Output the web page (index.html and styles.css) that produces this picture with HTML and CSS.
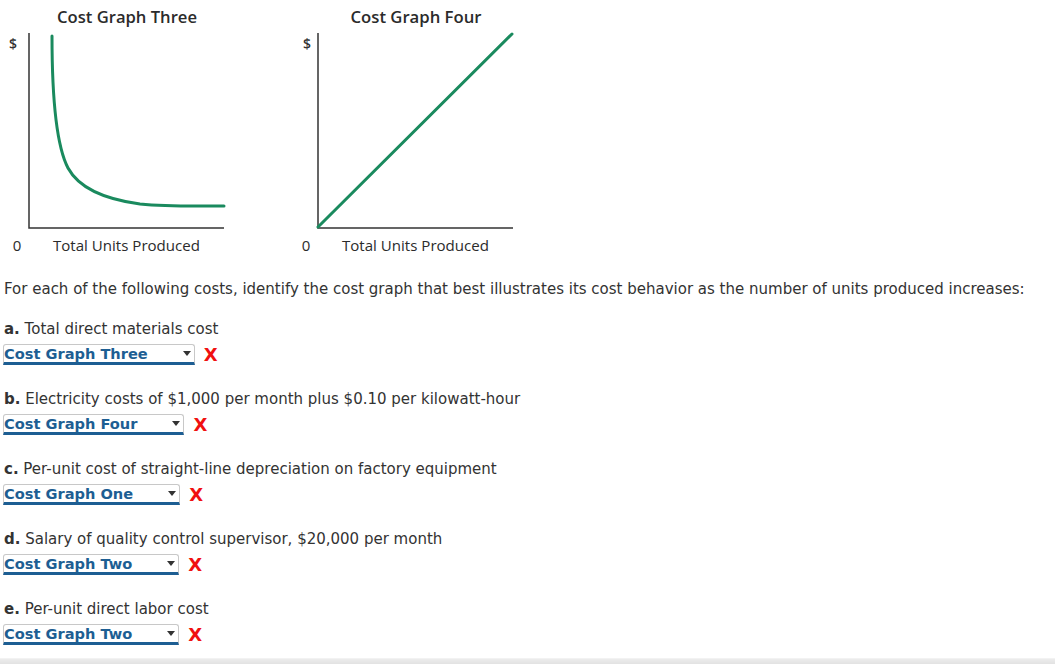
FILE: index.html
```html
<!DOCTYPE html>
<html>
<head>
<meta charset="utf-8">
<title>Cost Graphs</title>
<link rel="stylesheet" href="styles.css">
</head>
<body>
<div class="page">
  <svg class="graphs" width="530" height="262" viewBox="0 0 530 262" xmlns="http://www.w3.org/2000/svg">
    <g class="g-title">
      <text x="127" y="23" text-anchor="middle" textLength="140" lengthAdjust="spacingAndGlyphs">Cost Graph Three</text>
      <text x="416" y="23" text-anchor="middle" textLength="131" lengthAdjust="spacingAndGlyphs">Cost Graph Four</text>
    </g>
    <g class="g-dollar">
      <text x="13" y="49" text-anchor="middle">$</text>
      <text x="307" y="49" text-anchor="middle">$</text>
    </g>
    <path d="M29 33 V228 H224" class="axis"/>
    <path d="M318 33 V228 H513" class="axis"/>
    <path d="M52 36 C52 90 56 145 68 168 C80 190 110 200 140 204 C170 207 200 206 224 206" class="curve"/>
    <path d="M318 227 L512 34" class="curve"/>
    <g class="g-label">
      <text x="17" y="251" text-anchor="middle">0</text>
      <text x="53" y="251" textLength="147" lengthAdjust="spacingAndGlyphs">Total Units Produced</text>
      <text x="306" y="251" text-anchor="middle">0</text>
      <text x="342" y="251" textLength="147" lengthAdjust="spacingAndGlyphs">Total Units Produced</text>
    </g>
  </svg>

  <p class="intro">For each of the following costs, identify the cost graph that best illustrates its cost behavior as the number of units produced increases:</p>

  <div class="q">
    <div class="label"><b>a.</b> Total direct materials cost</div>
    <div class="answer"><span class="select"><span class="val">Cost Graph Three</span><span class="arrow"></span></span><span class="x">X</span></div>
  </div>
  <div class="q">
    <div class="label"><b>b.</b> Electricity costs of $1,000 per month plus $0.10 per kilowatt-hour</div>
    <div class="answer"><span class="select"><span class="val">Cost Graph Four</span><span class="arrow"></span></span><span class="x">X</span></div>
  </div>
  <div class="q">
    <div class="label"><b>c.</b> Per-unit cost of straight-line depreciation on factory equipment</div>
    <div class="answer"><span class="select"><span class="val">Cost Graph One</span><span class="arrow"></span></span><span class="x">X</span></div>
  </div>
  <div class="q">
    <div class="label"><b>d.</b> Salary of quality control supervisor, $20,000 per month</div>
    <div class="answer"><span class="select"><span class="val">Cost Graph Two</span><span class="arrow"></span></span><span class="x">X</span></div>
  </div>
  <div class="q">
    <div class="label"><b>e.</b> Per-unit direct labor cost</div>
    <div class="answer"><span class="select"><span class="val">Cost Graph Two</span><span class="arrow"></span></span><span class="x">X</span></div>
  </div>
</div>
<div class="bottom-bar"></div>
</body>
</html>
```

FILE: styles.css
```css
html, body {
  margin: 0;
  padding: 0;
  background: #fff;
}
body {
  font-family: "DejaVu Sans", Verdana, sans-serif;
  font-size: 15px;
  color: #333;
  width: 1055px;
  height: 664px;
  overflow: hidden;
  display: flex;
  flex-direction: column;
}
.page {
  padding: 0 4px;
  flex: 1;
}
.graphs {
  display: block;
  margin-left: -4px;
}
.g-title text {
  font-family: "Open Sans", "Lato", sans-serif;
  font-weight: 600;
  font-size: 16px;
  fill: #2b2b2b;
}
.g-dollar text {
  font-family: "Open Sans", sans-serif;
  font-weight: 600;
  font-size: 14px;
  fill: #333;
}
.g-label text {
  font-family: "Open Sans", "Lato", sans-serif;
  font-size: 15px;
  fill: #2b2b2b;
}
.axis {
  fill: none;
  stroke: #333;
  stroke-width: 1.5;
}
.curve {
  fill: none;
  stroke: #1a8a5e;
  stroke-width: 3;
  stroke-linecap: round;
}
.intro {
  margin: 18px 0 0;
  line-height: 18px;
}
.q {
  margin-top: 22px;
}
.q + .q {
  margin-top: 25px;
}
.label {
  line-height: 18px;
}
.label b {
  font-weight: bold;
}
.answer {
  display: flex;
  align-items: center;
  margin-top: 5px;
  height: 22px;
  margin-left: -1px;
}
.select {
  display: inline-flex;
  align-items: center;
  height: 17px;
  border: 1px solid #c8c8c8;
  border-bottom: 3px solid #1d5e93;
  border-radius: 3px 3px 0 0;
  padding: 0 3px 0 0;
  background: #fff;
}
.val {
  font-weight: bold;
  color: #1d5e93;
  font-size: 14.6px;
  line-height: 17px;
}
.arrow {
  width: 0;
  height: 0;
  border-left: 4px solid transparent;
  border-right: 4px solid transparent;
  border-top: 5px solid #333;
  margin-left: 35px;
}
.x {
  color: #f01010;
  font-weight: bold;
  font-family: "DejaVu Sans", sans-serif;
  font-size: 18px;
  margin-left: 9px;
}
.bottom-bar {
  height: 5px;
  background: linear-gradient(#ececec, #e2e2e2);
  border-top: 1px solid #f2f2f2;
}
```
